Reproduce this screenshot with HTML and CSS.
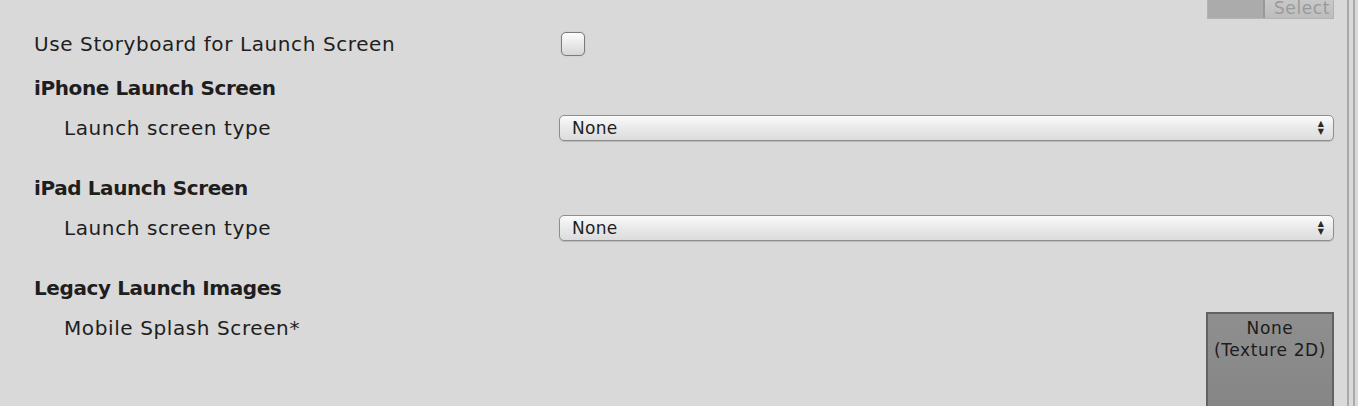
FILE: index.html
```html
<!DOCTYPE html>
<html lang="en">
<head>
    <meta charset="UTF-8">
    <title>Player Settings - Splash Image</title>
    <link rel="stylesheet" href="styles.css">
</head>
<body>

    <div class="inspector">
        <div class="panel">

            <!-- Rodapé da caixa de textura anterior -->
            <div class="top-row">
                <div class="select-widget">
                    <span class="select-thumb"></span>
                    <span class="select-btn">Select</span>
                </div>
            </div>

            <div class="row first">
                <span class="label">Use Storyboard for Launch Screen</span>
                <span class="field"><span class="checkbox"></span></span>
            </div>

            <div class="heading">iPhone Launch Screen</div>
            <div class="row">
                <span class="label sub">Launch screen type</span>
                <span class="field">
                    <span class="dropdown">
                        <span>None</span>
                        <span class="arrows"><span>&#9650;</span><span>&#9660;</span></span>
                    </span>
                </span>
            </div>

            <div class="heading spaced">iPad Launch Screen</div>
            <div class="row">
                <span class="label sub">Launch screen type</span>
                <span class="field">
                    <span class="dropdown">
                        <span>None</span>
                        <span class="arrows"><span>&#9650;</span><span>&#9660;</span></span>
                    </span>
                </span>
            </div>

            <div class="heading spaced">Legacy Launch Images</div>
            <div class="row texture-row">
                <span class="label sub">Mobile Splash Screen*</span>
                <div class="texture">None<br>(Texture 2D)</div>
            </div>

        </div>

        <div class="scrollbar">
            <span class="line"></span>
            <span class="line"></span>
        </div>
    </div>

</body>
</html>
```

FILE: styles.css
```css
/* Estilos gerais */
body {
    margin: 0;
    background-color: #d9d9d9;
    font-family: "DejaVu Sans", Verdana, sans-serif;
    font-size: 20px;
    letter-spacing: 0.6px;
    color: #1e1e1e;
    height: 406px;
    overflow: hidden;
}

.inspector {
    display: flex;
    height: 406px;
}

.panel {
    flex: 1;
    padding-left: 34px;
    padding-right: 12px;
}

.top-row {
    display: flex;
    justify-content: flex-end;
    height: 20px;
}

.select-widget {
    display: flex;
    width: 127px;
    height: 19px;
    border: 1px solid #b4b4b4;
    border-top: none;
    box-sizing: border-box;
}

.select-thumb {
    width: 55px;
    background-color: #ababab;
    border-right: 2px solid #999999;
}

.select-btn {
    flex: 1;
    background: linear-gradient(#c8c8c8, #bdbdbd);
    color: #9a9a9a;
    font-size: 17px;
    line-height: 17px;
    text-align: right;
    padding-right: 3px;
}

.row {
    display: flex;
    align-items: center;
    height: 40px;
}

.row.first {
    margin-top: 4px;
    margin-bottom: 4px;
}

.label {
    width: 525px;
    white-space: nowrap;
}

.label.sub {
    padding-left: 30px;
    width: 495px;
}

.field {
    flex: 1;
    display: flex;
    align-items: center;
}

.heading {
    height: 40px;
    line-height: 40px;
    font-weight: bold;
    letter-spacing: -0.4px;
}

.heading.spaced {
    margin-top: 20px;
}

.checkbox {
    width: 22px;
    height: 22px;
    margin-left: 2px;
    border: 1px solid #7b7b7b;
    border-radius: 5px;
    background: linear-gradient(#fdfdfd, #d6d6d6);
    box-shadow: 0 0 1px rgba(0, 0, 0, 0.3);
}

.dropdown {
    flex: 1;
    display: flex;
    justify-content: space-between;
    align-items: center;
    height: 26px;
    box-sizing: border-box;
    padding: 0 9px 0 12px;
    border: 1px solid #8e8e8e;
    border-radius: 5px;
    background: linear-gradient(#fbfbfb, #e9e9e9 50%, #dcdcdc);
    font-size: 17px;
    letter-spacing: 0.3px;
    box-shadow: 0 1px 1px rgba(0, 0, 0, 0.15);
}

.arrows {
    display: flex;
    flex-direction: column;
    font-size: 8px;
    line-height: 8px;
    letter-spacing: 0;
    color: #2a2a2a;
}

.texture-row {
    align-items: flex-start;
    height: auto;
}

.texture-row .label {
    flex: 1;
    width: auto;
    line-height: 40px;
}

.texture {
    width: 128px;
    height: 100px;
    margin-top: 4px;
    box-sizing: border-box;
    border: 2px solid #626262;
    border-bottom: none;
    background: linear-gradient(#8f8f8f, #858585);
    text-align: center;
    font-size: 17px;
    line-height: 22px;
    letter-spacing: 0.6px;
    color: #1c1c1c;
    padding-top: 3px;
}

.scrollbar {
    width: 11px;
    display: flex;
    gap: 4px;
    padding-left: 1px;
}

.line {
    width: 2px;
    background-color: #aaaaaa;
}
```
